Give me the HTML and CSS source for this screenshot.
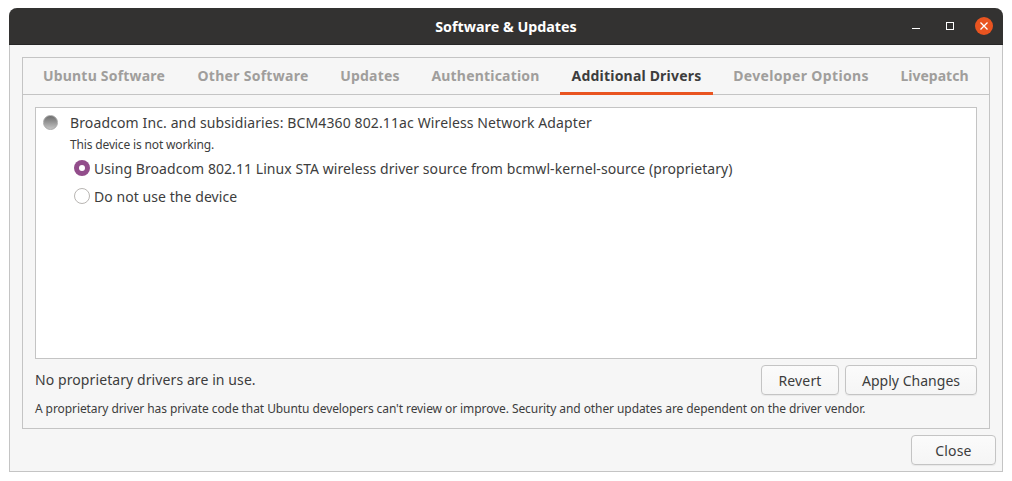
FILE: index.html
```html
<!DOCTYPE html>
<html lang="en">
<head>
<meta charset="utf-8">
<title>Software &amp; Updates</title>
<link rel="stylesheet" href="styles.css">
</head>
<body>
<div class="window">
  <header class="titlebar">
    <span class="title">Software &amp; Updates</span>
    <div class="controls">
      <svg class="ctl min" width="16" height="16" viewBox="0 0 16 16"><path d="M4 10.500h8" stroke="#fff" stroke-width="1" fill="none"/></svg>
      <svg class="ctl" width="16" height="16" viewBox="0 0 16 16"><rect x="4.500" y="4.500" width="7" height="7" stroke="#fff" stroke-width="1" fill="none"/></svg>
      <svg class="ctl" width="18" height="18" viewBox="0 0 18 18"><circle cx="9" cy="9" r="9" fill="#e95420"/><path d="M5.500 5.500l7 7M12.500 5.500l-7 7" stroke="#fff" stroke-width="1.300" fill="none"/></svg>
    </div>
  </header>
  <main class="content">
    <section class="notebook">
      <nav class="tabs">
        <span class="tab t1">Ubuntu Software</span>
        <span class="tab t2">Other Software</span>
        <span class="tab t3">Updates</span>
        <span class="tab t4">Authentication</span>
        <span class="tab active t5">Additional Drivers</span>
        <span class="tab t6">Developer Options</span>
        <span class="tab t7">Livepatch</span>
      </nav>
      <div class="page">
        <div class="list">
          <div class="device">
            <span class="led"></span>
            <span class="device-name">Broadcom Inc. and subsidiaries: BCM4360 802.11ac Wireless Network Adapter</span>
          </div>
          <div class="status">This device is not working.</div>
          <div class="option">
            <svg class="radio" width="16" height="16" viewBox="0 0 16 16"><circle cx="8" cy="8" r="8" fill="#924d8b"/><circle cx="8" cy="8" r="3" fill="#fff"/></svg>
            <span class="opt-a">Using Broadcom 802.11 Linux STA wireless driver source from bcmwl-kernel-source (proprietary)</span>
          </div>
          <div class="option">
            <svg class="radio" width="16" height="16" viewBox="0 0 16 16"><circle cx="8" cy="8" r="7.500" fill="#fff" stroke="#b8b5b2"/></svg>
            <span>Do not use the device</span>
          </div>
        </div>
        <div class="actions">
          <span class="inuse">No proprietary drivers are in use.</span>
          <div class="btns">
            <button class="btn revert">Revert</button>
            <button class="btn apply">Apply Changes</button>
          </div>
        </div>
        <p class="note">A proprietary driver has private code that Ubuntu developers can't review or improve. Security and other updates are dependent on the driver vendor.</p>
      </div>
    </section>
    <div class="footer"><button class="btn close">Close</button></div>
  </main>
</div>
</body>
</html>
```
FILE: styles.css
```css
* { box-sizing: border-box; }
html, body { margin: 0; height: 100%; background: #fff; }
body {
  padding: 8px 0 0 9px;
  font-family: "Noto Sans", "Open Sans", sans-serif;
  font-size: 14px;
  color: #3d3d3d;
}
.window {
  width: 994px;
  height: 464px;
  display: flex;
  flex-direction: column;
  border: 1px solid #c4c4c4;
  border-top: 0;
  border-radius: 8px 8px 0 0;
  background: #f6f6f6;
}
.titlebar {
  height: 37px;
  flex: none;
  margin: 0 -1px;
  padding-top: 1px;
  background: #333231;
  border-bottom: 1px solid #262626;
  border-radius: 8px 8px 0 0;
  display: flex;
  align-items: center;
  justify-content: center;
  position: relative;
}
.title { color: #fff; font-weight: 700; font-size: 14.3px; }
.controls {
  position: absolute;
  right: 10px;
  top: 9px;
  display: flex;
  align-items: center;
  gap: 17px;
}
.min { margin-right: 1px; }
.content { flex: 1; padding: 12px 0 5px 12px; display: flex; flex-direction: column; }
.notebook {
  width: 968px;
  height: 372px;
  flex: none;
  margin-bottom: 6px;
  border: 1px solid #c4c4c4;
  display: flex;
  flex-direction: column;
}
.tabs {
  height: 37px;
  flex: none;
  display: flex;
  gap: 8px;
  border-bottom: 1px solid #c4c4c4;
  padding-left: 8px;
}
.tab {
  height: 37px;
  line-height: 36px;
  text-align: center;
  font-weight: 700;
  font-size: 14px;
  letter-spacing: .2px;
  color: #a09e9c;
  white-space: nowrap;
}
.tab.active { color: #3d3d3d; border-bottom: 3px solid #e95420; }
.t1 { width: 146px; }
.t2 { width: 136px; letter-spacing: .28px; }
.t3 { width: 82px; }
.t4 { width: 133px; }
.t5 { width: 153px; }
.t6 { width: 160px; letter-spacing: .35px; }
.t7 { width: 91px; letter-spacing: 0; }
.page { flex: 1; background: #f6f6f6; padding: 12px 12px 0; display: flex; flex-direction: column; }
.list {
  width: 942px;
  height: 252px;
  flex: none;
  background: #fff;
  border: 1px solid #c4c4c4;
  padding: 5px 7px 0;
}
.device { display: flex; align-items: center; height: 18px; }
.led {
  width: 15px;
  height: 15px;
  flex: none;
  margin-right: 12px;
  border-radius: 50%;
  border: 1px solid #a8a8a8;
  background: linear-gradient(#6f6f6f, #8f8f8f 40%, #c4c4c4);
}
.device-name { letter-spacing: .12px; white-space: nowrap; }
.status { font-size: 12px; height: 18px; line-height: 17px; margin: 5px 0 0 27px; letter-spacing: -.15px; }
.option { display: flex; align-items: center; gap: 4px; margin-left: 31px; height: 28px; letter-spacing: .065px; white-space: nowrap; }
.radio { flex: none; }
.actions { height: 30px; margin-top: 6px; flex: none; display: flex; justify-content: space-between; align-items: center; width: 942px; }
.inuse { letter-spacing: .09px; margin-bottom: 2px; }
.btns { display: flex; gap: 6px; }
.btn {
  font: inherit;
  letter-spacing: .15px;
  color: #3d3d3d;
  height: 30px;
  padding: 0;
  background: linear-gradient(#fbfbfb, #f5f5f5);
  border: 1px solid #c4c4c4;
  border-radius: 4px;
  box-shadow: 0 1px 1px rgba(0,0,0,.06);
}
.revert { width: 78px; }
.apply { width: 132px; letter-spacing: .03px; }
.close { width: 85px; }
.note { margin: 6px 0 0; font-size: 12px; line-height: 16px; letter-spacing: -.083px; white-space: nowrap; }
.footer { display: flex; justify-content: flex-end; width: 974px; }
```
